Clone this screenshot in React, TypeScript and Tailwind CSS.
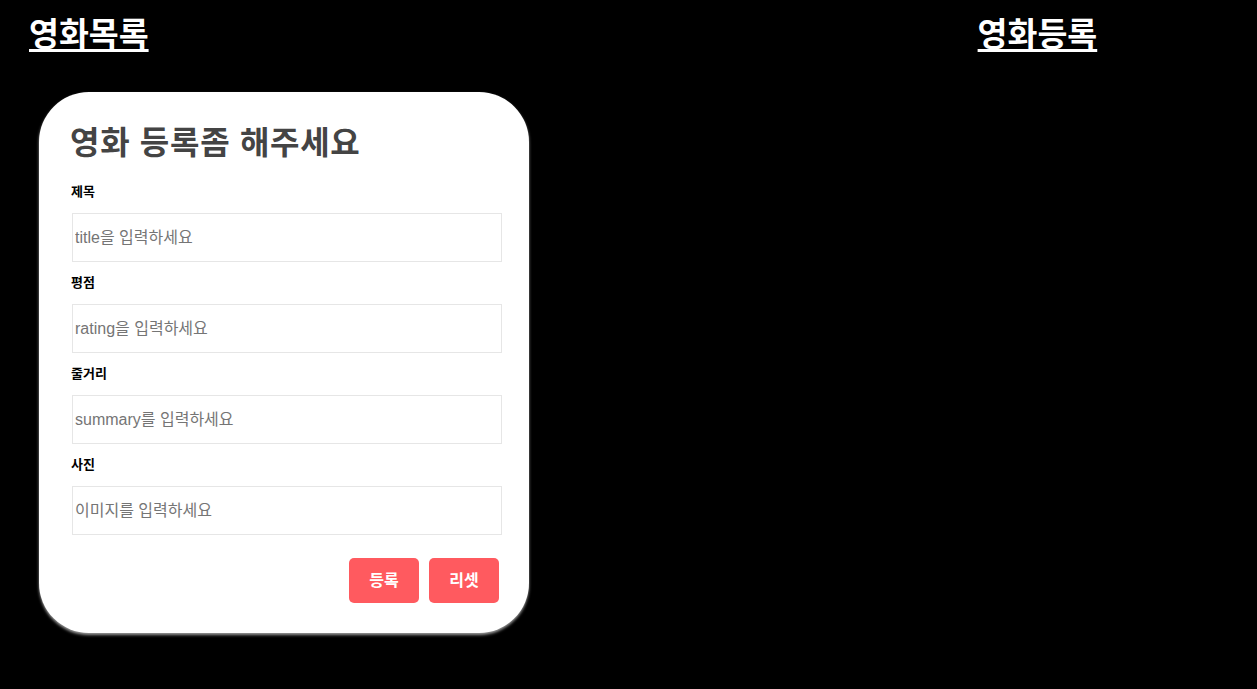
import React from "react";

const font = { fontFamily: '"Liberation Sans", "Noto Sans CJK KR", sans-serif' };

function Field({ label, placeholder }: { label: string; placeholder: string }) {
  return (
    <div className="flex flex-col">
      <label className="text-[13px] leading-[16px] font-bold text-black mb-[13px] -ml-[1px]">{label}</label>
      <input
        className="w-[430px] h-[49px] border border-[#e6e6e6] px-[2px] text-[16px] text-black placeholder:text-[#757575] outline-none"
        placeholder={placeholder}
      />
    </div>
  );
}

export default function App() {
  return (
    <div className="min-h-[689px] w-full bg-black" style={font}>
      <nav className="flex pt-[17px] pl-[29px]">
        <a href="#" className="text-[32.5px] leading-[36px] font-bold text-white underline underline-offset-[3px] decoration-[3px]">
          영화목록
        </a>
        <a href="#" className="ml-[829px] text-[32.5px] leading-[36px] font-bold text-white underline underline-offset-[3px] decoration-[3px]">
          영화등록
        </a>
      </nav>
      <div className="ml-[39px] mt-[39px] w-[490px] bg-white rounded-[50px] pt-[33px] pb-[30px] pl-[33px] shadow-[0_2px_3px_#9a9a9a]">
        <h1 className="text-[32px] leading-[36px] tracking-[0.7px] font-bold text-[#444444] -ml-[2px] mb-[23px]">영화 등록좀 해주세요</h1>
        <div className="flex flex-col gap-[13px]">
          <Field label="제목" placeholder="title을 입력하세요" />
          <Field label="평점" placeholder="rating을 입력하세요" />
          <Field label="줄거리" placeholder="summary를 입력하세요" />
          <Field label="사진" placeholder="이미지를 입력하세요" />
        </div>
        <div className="w-[430px] flex justify-end gap-[10px] pr-[3px] mt-[23px]">
          <button className="w-[70px] h-[45px] rounded-[5px] bg-[#ff5a5f] text-white text-[16px] font-bold">등록</button>
          <button className="w-[70px] h-[45px] rounded-[5px] bg-[#ff5a5f] text-white text-[16px] font-bold">리셋</button>
        </div>
      </div>
    </div>
  );
}
